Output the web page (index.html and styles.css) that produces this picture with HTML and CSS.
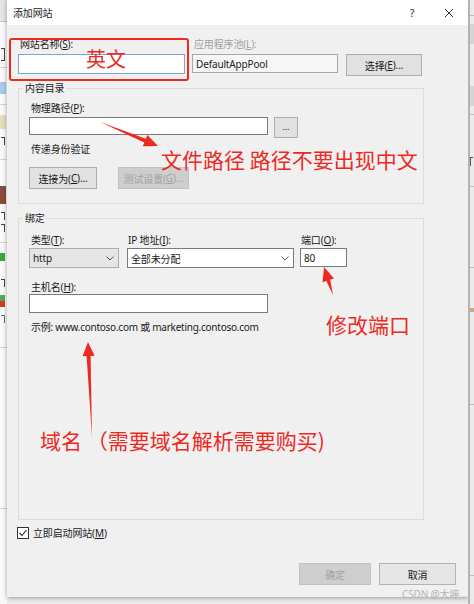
FILE: index.html
```html
<!DOCTYPE html>
<html lang="zh-CN">
<head>
<meta charset="utf-8">
<title>添加网站</title>
<link rel="stylesheet" href="styles.css">
</head>
<body>
<div class="screen">
  <div class="bg-left">
    <div class="bl-top"></div>
    <div class="bl-gap h26"></div>
    <div class="bl-mark tall"></div>
    <div class="bl-line mt6"></div>
    <div class="bl-icon blue mt14"></div>
    <div class="bl-line mt10"></div>
    <div class="bl-icon tan mt10"></div>
    <div class="bl-mark mt8"></div>
    <div class="bl-line mt14"></div>
    <div class="bl-icon brown mt26"></div>
    <div class="bl-mark mt8"></div>
    <div class="bl-mark mt4"></div>
    <div class="bl-line mt10"></div>
    <div class="bl-icon green mt10"></div>
    <div class="bl-mark mt18"></div>
    <div class="bl-icon green2 mt8"></div>
    <div class="bl-icon red"></div>
    <div class="bl-mark blueg mt8"></div>
    <div class="bl-line mt24"></div>
    <div class="bl-line mt160"></div>
  </div>

  <div class="dialog">
    <div class="titlebar">
      <span class="title">添加网站</span>
      <span class="help">?</span>
      <span class="close"><svg width="10" height="10" viewBox="0 0 10 10"><path d="M1 1 L9 9 M9 1 L1 9" stroke="#333" stroke-width="1" fill="none"/></svg></span>
    </div>

    <div class="body">
      <div class="row1">
        <div class="col-name">
          <span class="lbl">网站名称(<u>S</u>):</span>
          <div class="input focus"></div>
        </div>
        <div class="col-pool">
          <span class="lbl disabled">应用程序池(<u>L</u>):</span>
          <div class="input ro">DefaultAppPool</div>
        </div>
        <div class="btn btn-select">选择(<u>E</u>)...</div>
      </div>

      <div class="group g1">
        <span class="gtitle">内容目录</span>
        <span class="lbl first">物理路径(<u>P</u>):</span>
        <div class="pathrow">
          <div class="input path"></div>
          <div class="btn btn-dots">...</div>
        </div>
        <span class="lbl pass">传递身份验证</span>
        <div class="btnrow">
          <div class="btn btn-connect">连接为(<u>C</u>)...</div>
          <div class="btn btn-test disabled">测试设置(<u>G</u>)...</div>
        </div>
      </div>

      <div class="group g2">
        <span class="gtitle">绑定</span>
        <div class="bindrow">
          <div class="bcol c-type">
            <span class="lbl">类型(<u>T</u>):</span>
            <div class="select gray"><span>http</span><svg width="8" height="5" viewBox="0 0 8 5"><polyline points="0.5,0.5 4,4 7.5,0.5" fill="none" stroke="#555" stroke-width="1"/></svg></div>
          </div>
          <div class="bcol c-ip">
            <span class="lbl">IP 地址(<u>I</u>):</span>
            <div class="select"><span>全部未分配</span><svg width="8" height="5" viewBox="0 0 8 5"><polyline points="0.5,0.5 4,4 7.5,0.5" fill="none" stroke="#555" stroke-width="1"/></svg></div>
          </div>
          <div class="bcol c-port">
            <span class="lbl">端口(<u>O</u>):</span>
            <div class="input port">80</div>
          </div>
        </div>
        <span class="lbl host">主机名(<u>H</u>):</span>
        <div class="input hostin"></div>
        <span class="lbl example">示例: www.contoso.com 或 marketing.contoso.com</span>
      </div>

      <div class="checkrow">
        <span class="checkbox"><svg width="10" height="10" viewBox="0 0 10 10"><polyline points="1.5,5 4,7.5 8.5,2" fill="none" stroke="#222" stroke-width="1.1"/></svg></span>
        <span class="checklbl">立即启动网站(<u>M</u>)</span>
      </div>

      <div class="actions">
        <div class="btn btn-ok disabled">确定</div>
        <div class="btn btn-cancel">取消</div>
      </div>
    </div>
  </div>

  <div class="bg-right">
    <div class="br-line mt15"></div>
    <div class="br-block mt8"></div>
    <div class="br-block mt42"></div>
    <div class="br-line mt8"></div>
    <div class="br-mark"></div>
    <div class="br-line mt20"></div>
    <div class="br-line mt80"></div>
    <div class="br-dot"></div>
    <div class="br-line mt92"></div>
    <div class="br-line mt170"></div>
  </div>

  <div class="annot">
    <div class="redbox"></div>
    <span class="note n-en">英文</span>
    <span class="note n-path">文件路径 路径不要出现中文</span>
    <span class="note n-port">修改端口</span>
    <span class="note n-domain">域名 （需要域名解析需要购买)</span>
    <svg class="arrows" width="474" height="604" viewBox="0 0 474 604">
      <polygon points="100,122 144.3,142.5 142.8,146.2 158,146 147.4,135.1 145.8,138.8" fill="#ec2a1f"/>
      <polygon points="333,295 330.2,279.7 334,278.5 324,267 322.6,282.2 326.4,280.9" fill="#ec2a1f"/>
      <polygon points="92,437 90.6,355.9 94.6,355.7 88,342 82.6,356.2 86.6,356.1" fill="#ec2a1f"/>
    </svg>
    <span class="watermark">CSDN @大坤...</span>
  </div>
</div>
</body>
</html>
```

FILE: styles.css
```css
* { box-sizing: border-box; }

body {
  margin: 0;
  font-family: "Noto Sans", "Noto Sans CJK SC", sans-serif;
  font-size: 10px;
  letter-spacing: -0.15px;
  color: #1a1a1a;
}

u { text-decoration: underline; text-underline-offset: 1px; }

.screen {
  position: relative;
  display: flex;
  width: 474px;
  height: 604px;
  background: #ededed;
  overflow: hidden;
}

/* background window, left edge */
.bg-left {
  width: 7px;
  flex: none;
  background: #fafafa;
  display: flex;
  flex-direction: column;
  overflow: hidden;
}
.bl-top { height: 22px; background: #e6e6e6; border-bottom: 1px solid #c9c9c9; flex: none; }
.bl-gap { flex: none; }
.h26 { height: 26px; }
.bl-line { height: 1px; background: #d2d2d2; flex: none; }
.bl-mark {
  flex: none;
  width: 4px;
  height: 8px;
  margin-left: 1px;
  border-top: 1px solid #444;
  border-right: 1px solid #444;
}
.bl-mark.tall { height: 13px; border-bottom: 1px solid #444; }
.bl-mark.blueg { border-color: #4a6ea8; }
.bl-icon { flex: none; height: 12px; width: 6px; }
.bl-icon.blue { background: #a8c8ec; }
.bl-icon.tan { background: #e8dcc0; height: 14px; }
.bl-icon.brown { background: #8a4c3c; height: 18px; }
.bl-icon.green { background: #3aa845; height: 8px; width: 5px; }
.bl-icon.green2 { background: #4caf50; height: 6px; width: 5px; }
.bl-icon.red { background: #d83a2a; height: 6px; width: 5px; }
.mt4 { margin-top: 4px; }
.mt6 { margin-top: 6px; }
.mt8 { margin-top: 8px; }
.mt10 { margin-top: 10px; }
.mt14 { margin-top: 14px; }
.mt15 { margin-top: 15px; }
.mt18 { margin-top: 18px; }
.mt20 { margin-top: 20px; }
.mt24 { margin-top: 24px; }
.mt26 { margin-top: 26px; }
.mt42 { margin-top: 42px; }
.mt80 { margin-top: 80px; }
.mt92 { margin-top: 92px; }
.mt160 { margin-top: 160px; }
.mt170 { margin-top: 170px; }

/* background window, right edge */
.bg-right {
  width: 6px;
  flex: none;
  background: #ebebeb;
  border-left: 2px solid #b4b4b4;
  display: flex;
  flex-direction: column;
  overflow: hidden;
}
.br-line { height: 1px; background: #bdbdbd; flex: none; }
.br-block { height: 20px; background: #d4d4d4; flex: none; }
.br-mark { flex: none; height: 9px; width: 3px; margin-top: 42px; border-left: 1px solid #555; border-top: 1px solid #555; }
.br-dot { height: 4px; background: #c9a888; margin-top: 40px; flex: none; }

/* dialog */
.dialog {
  width: 461px;
  height: 597px;
  flex: none;
  background: #f0f0f0;
  display: flex;
  flex-direction: column;
  box-shadow: 0 1px 5px rgba(0, 0, 0, 0.35);
}

.titlebar {
  height: 25px;
  flex: none;
  background: #ffffff;
  display: flex;
  align-items: center;
  padding: 0 14px 0 6px;
}
.title { flex: 1; font-family: "Noto Sans CJK SC", sans-serif; color: #222; }
.help { width: 10px; text-align: center; font-size: 11px; color: #333; }
.close { width: 10px; height: 10px; margin-left: 27px; display: flex; }

.body {
  flex: 1;
  display: flex;
  flex-direction: column;
  padding: 13px 12px 12px 11px;
}

.lbl {
  display: block;
  line-height: 12px;
  padding-left: 2px;
  white-space: nowrap;
}
.lbl.disabled { color: #a0a0a0; }

.input {
  height: 20px;
  border: 1px solid #7a7a7a;
  background: #ffffff;
  display: flex;
  align-items: center;
  padding-left: 3px;
  white-space: nowrap;
}

.btn {
  height: 22px;
  border: 1px solid #adadad;
  background: #e1e1e1;
  display: flex;
  align-items: center;
  justify-content: center;
  white-space: nowrap;
  flex: none;
}
.btn.disabled {
  background: #cecece;
  border-color: #c2c2c2;
  color: #a2a2a2;
}

/* first row */
.row1 { display: flex; align-items: flex-start; }
.row1 .lbl { margin-bottom: 4px; }
.col-name { width: 167px; }
.col-pool { width: 146px; margin-left: 7px; }
.input.focus { border-color: #7aa6d8; }
.input.ro { height: 19px; background: #f6f6f6; border-color: #a8a8a8; color: #222; }
.btn-select { width: 76px; margin-left: 8px; margin-top: 16px; }

/* group boxes */
.group {
  width: 406px;
  border: 1px solid #dcdcdc;
  padding: 0 10px 0 10px;
}
.gtitle {
  display: block;
  width: max-content;
  margin: -7px 0 0 -6px;
  padding: 0 2px;
  line-height: 12px;
  background: #f0f0f0;
}
.g1 { margin-top: 12px; padding-bottom: 14px; }
.g1 .lbl.first { margin-top: 8px; margin-bottom: 3px; }
.pathrow { display: flex; align-items: flex-start; }
.input.path { width: 239px; height: 18px; }
.btn-dots { width: 24px; height: 21px; margin-left: 6px; font-size: 9px; padding-bottom: 3px; }
.lbl.pass { margin-top: 5px; }
.btnrow { display: flex; margin-top: 12px; }
.btn-connect { width: 68px; height: 22px; }
.btn-test { width: 71px; height: 22px; margin-left: 21px; }

.g2 { margin-top: 14px; padding-bottom: 186px; }
.bindrow { display: flex; margin-top: 10px; }
.bcol .lbl { margin-bottom: 2px; }
.c-type { width: 90px; }
.c-ip { width: 167px; margin-left: 8px; }
.c-ip .lbl, .c-port .lbl { padding-left: 1px; }
.c-port { width: 47px; margin-left: 6px; }
.select {
  height: 20px;
  border: 1px solid #7a7a7a;
  background: #ffffff;
  display: flex;
  align-items: center;
  justify-content: space-between;
  padding: 0 4px 0 3px;
}
.select.gray { background: #e5e5e5; border-color: #adadad; }
.input.port { height: 19px; }
.lbl.host { margin-top: 13px; margin-bottom: 1px; }
.input.hostin { width: 239px; height: 19px; }
.lbl.example { margin-top: 8px; letter-spacing: -0.25px; }

/* checkbox */
.checkrow { display: flex; align-items: center; margin-top: 7px; margin-left: -1px; height: 12px; }
.checkbox {
  width: 12px;
  height: 12px;
  border: 1px solid #333;
  background: #fff;
  display: flex;
  align-items: center;
  justify-content: center;
}
.checklbl { margin-left: 4px; line-height: 12px; }

/* dialog buttons */
.actions { display: flex; justify-content: flex-end; margin-top: 24px; }
.btn-ok { width: 72px; }
.btn-cancel { width: 77px; margin-left: 8px; background: #e5e5e5; border-color: #b3b3b3; }

/* annotation overlay */
.annot {
  position: absolute;
  inset: 0;
  pointer-events: none;
}
.redbox {
  position: absolute;
  left: 9px;
  top: 38px;
  width: 180px;
  height: 43px;
  border: 2px solid #ec2a1f;
  border-radius: 3px;
}
.note {
  position: absolute;
  font-family: "Noto Sans CJK SC", sans-serif;
  font-size: 21px;
  line-height: 24px;
  letter-spacing: 0;
  color: #ec2a1f;
  white-space: nowrap;
}
.n-en { left: 86px; top: 47px; font-size: 20px; }
.n-path { left: 161px; top: 147px; }
.n-port { left: 326px; top: 312px; }
.n-domain { left: 40px; top: 428px; }
.arrows { position: absolute; left: 0; top: 0; }
.watermark {
  position: absolute;
  left: 402px;
  top: 588px;
  font-size: 10px;
  line-height: 12px;
  color: #b4b4b4;
  white-space: nowrap;
}
```
